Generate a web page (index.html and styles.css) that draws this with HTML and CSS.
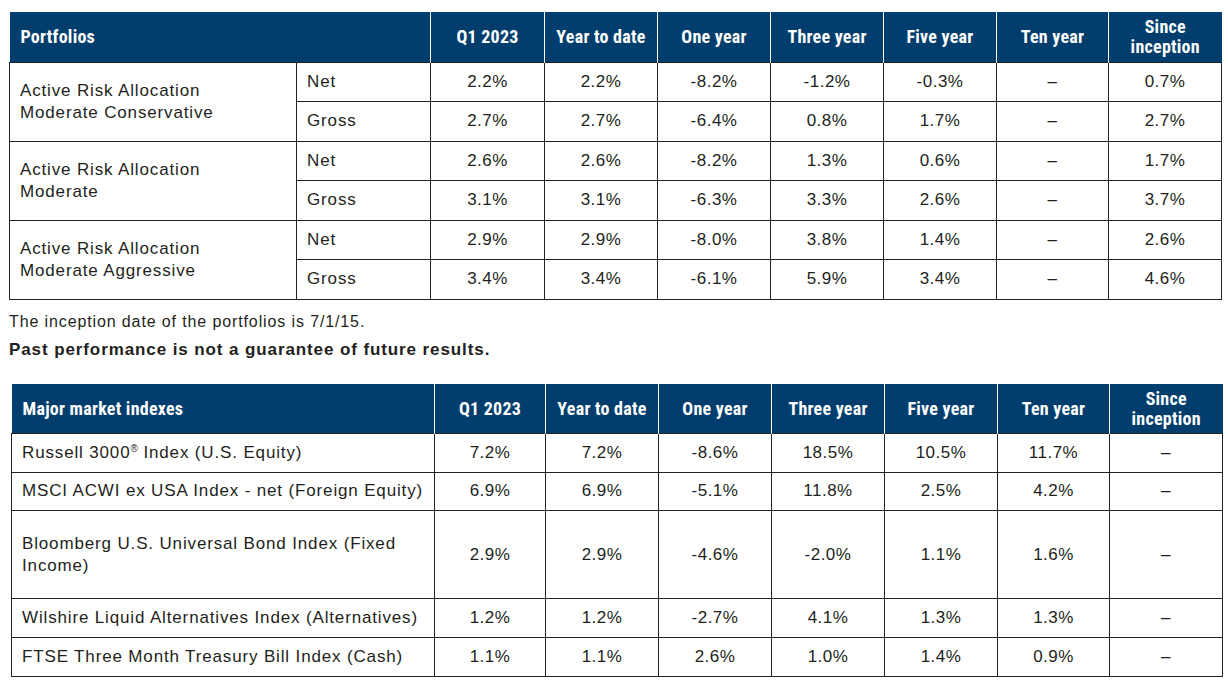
FILE: index.html
```html
<!DOCTYPE html>
<html>
<head>
<meta charset="utf-8">
<link rel="stylesheet" href="styles.css">
</head>
<body>
<div class="page">
  <table class="perf perf-portfolios">
    <colgroup>
      <col style="width:287px"><col style="width:134px">
      <col style="width:114px"><col style="width:113px"><col style="width:113px"><col style="width:113px"><col style="width:113px"><col style="width:112px"><col style="width:113px">
    </colgroup>
    <thead>
      <tr>
        <th class="lbl" colspan="2">Portfolios</th>
        <th>Q1 2023</th><th>Year to date</th><th>One year</th><th>Three year</th><th>Five year</th><th>Ten year</th><th>Since<br>inception</th>
      </tr>
    </thead>
    <tbody>
      <tr><td class="name" rowspan="2">Active Risk Allocation<br>Moderate Conservative</td><td class="kind">Net</td><td>2.2%</td><td>2.2%</td><td>-8.2%</td><td>-1.2%</td><td>-0.3%</td><td>–</td><td>0.7%</td></tr>
      <tr><td class="kind">Gross</td><td>2.7%</td><td>2.7%</td><td>-6.4%</td><td>0.8%</td><td>1.7%</td><td>–</td><td>2.7%</td></tr>
      <tr><td class="name" rowspan="2">Active Risk Allocation<br>Moderate</td><td class="kind">Net</td><td>2.6%</td><td>2.6%</td><td>-8.2%</td><td>1.3%</td><td>0.6%</td><td>–</td><td>1.7%</td></tr>
      <tr><td class="kind">Gross</td><td>3.1%</td><td>3.1%</td><td>-6.3%</td><td>3.3%</td><td>2.6%</td><td>–</td><td>3.7%</td></tr>
      <tr><td class="name" rowspan="2">Active Risk Allocation<br>Moderate Aggressive</td><td class="kind">Net</td><td>2.9%</td><td>2.9%</td><td>-8.0%</td><td>3.8%</td><td>1.4%</td><td>–</td><td>2.6%</td></tr>
      <tr><td class="kind">Gross</td><td>3.4%</td><td>3.4%</td><td>-6.1%</td><td>5.9%</td><td>3.4%</td><td>–</td><td>4.6%</td></tr>
    </tbody>
  </table>

  <p class="note">The inception date of the portfolios is 7/1/15.</p>
  <p class="disclaimer">Past performance is not a guarantee of future results.</p>

  <table class="perf perf-indexes">
    <colgroup>
      <col style="width:423px">
      <col style="width:111px"><col style="width:113px"><col style="width:113px"><col style="width:113px"><col style="width:113px"><col style="width:112px"><col style="width:113px">
    </colgroup>
    <thead>
      <tr>
        <th class="lbl">Major market indexes</th>
        <th>Q1 2023</th><th>Year to date</th><th>One year</th><th>Three year</th><th>Five year</th><th>Ten year</th><th>Since<br>inception</th>
      </tr>
    </thead>
    <tbody>
      <tr><td class="name">Russell 3000<sup>®</sup> Index (U.S. Equity)</td><td>7.2%</td><td>7.2%</td><td>-8.6%</td><td>18.5%</td><td>10.5%</td><td>11.7%</td><td>–</td></tr>
      <tr><td class="name">MSCI ACWI ex USA Index - net (Foreign Equity)</td><td>6.9%</td><td>6.9%</td><td>-5.1%</td><td>11.8%</td><td>2.5%</td><td>4.2%</td><td>–</td></tr>
      <tr class="tall"><td class="name">Bloomberg U.S. Universal Bond Index (Fixed<br>Income)</td><td>2.9%</td><td>2.9%</td><td>-4.6%</td><td>-2.0%</td><td>1.1%</td><td>1.6%</td><td>–</td></tr>
      <tr><td class="name">Wilshire Liquid Alternatives Index (Alternatives)</td><td>1.2%</td><td>1.2%</td><td>-2.7%</td><td>4.1%</td><td>1.3%</td><td>1.3%</td><td>–</td></tr>
      <tr class="last"><td class="name">FTSE Three Month Treasury Bill Index (Cash)</td><td>1.1%</td><td>1.1%</td><td>2.6%</td><td>1.0%</td><td>1.4%</td><td>0.9%</td><td>–</td></tr>
    </tbody>
  </table>
</div>
</body>
</html>
```

FILE: styles.css
```css
html, body {
  margin: 0;
  padding: 0;
  background: #ffffff;
}

.page {
  padding: 12px 6px 0 9px;
  font-family: "Liberation Sans", Arial, sans-serif;
  color: #231f20;
}

.perf {
  border-collapse: collapse;
  table-layout: fixed;
  width: 1213px;
}

.perf-indexes {
  margin-left: 2px;
  width: 1211px;
}

.perf th {
  background: #023e6d;
  color: #ffffff;
  font-family: "Liberation Sans Narrow", "Arial Narrow", "Roboto Condensed", sans-serif;
  font-weight: bold;
  font-size: 18px;
  line-height: 20px;
  letter-spacing: 0.25px;
  height: 50px;
  padding: 1px 4px 0 4px;
  text-align: center;
  vertical-align: middle;
  border-left: 1px solid #ffffff;
  box-sizing: border-box;
}

.perf th.lbl {
  text-align: left;
  padding-left: 11px;
  border-left: none;
}

.perf td {
  border: 1px solid #222222;
  font-size: 17px;
  line-height: 22px;
  height: 39.5px;
  padding: 0 4px;
  text-align: center;
  vertical-align: middle;
  box-sizing: border-box;
  letter-spacing: 0.5px;
}

.perf td.name {
  text-align: left;
  padding-left: 10px;
  letter-spacing: 0.85px;
}

.perf td.kind {
  text-align: left;
  padding-left: 10px;
  letter-spacing: 0.85px;
}

.perf-indexes td {
  height: 38.5px;
}

.perf-indexes tr.tall td {
  height: 88px;
}

.perf-indexes tr.last td {
  height: 39.5px;
}

.perf sup {
  font-size: 10px;
  line-height: 0;
  vertical-align: 6px;
  letter-spacing: 0;
}

.note {
  margin: 12px 0 0 0;
  font-size: 16px;
  line-height: 20px;
  letter-spacing: 0.88px;
}

.disclaimer {
  margin: 7px 0 23px 0;
  font-size: 17px;
  line-height: 22px;
  font-weight: bold;
  letter-spacing: 0.9px;
}
```
